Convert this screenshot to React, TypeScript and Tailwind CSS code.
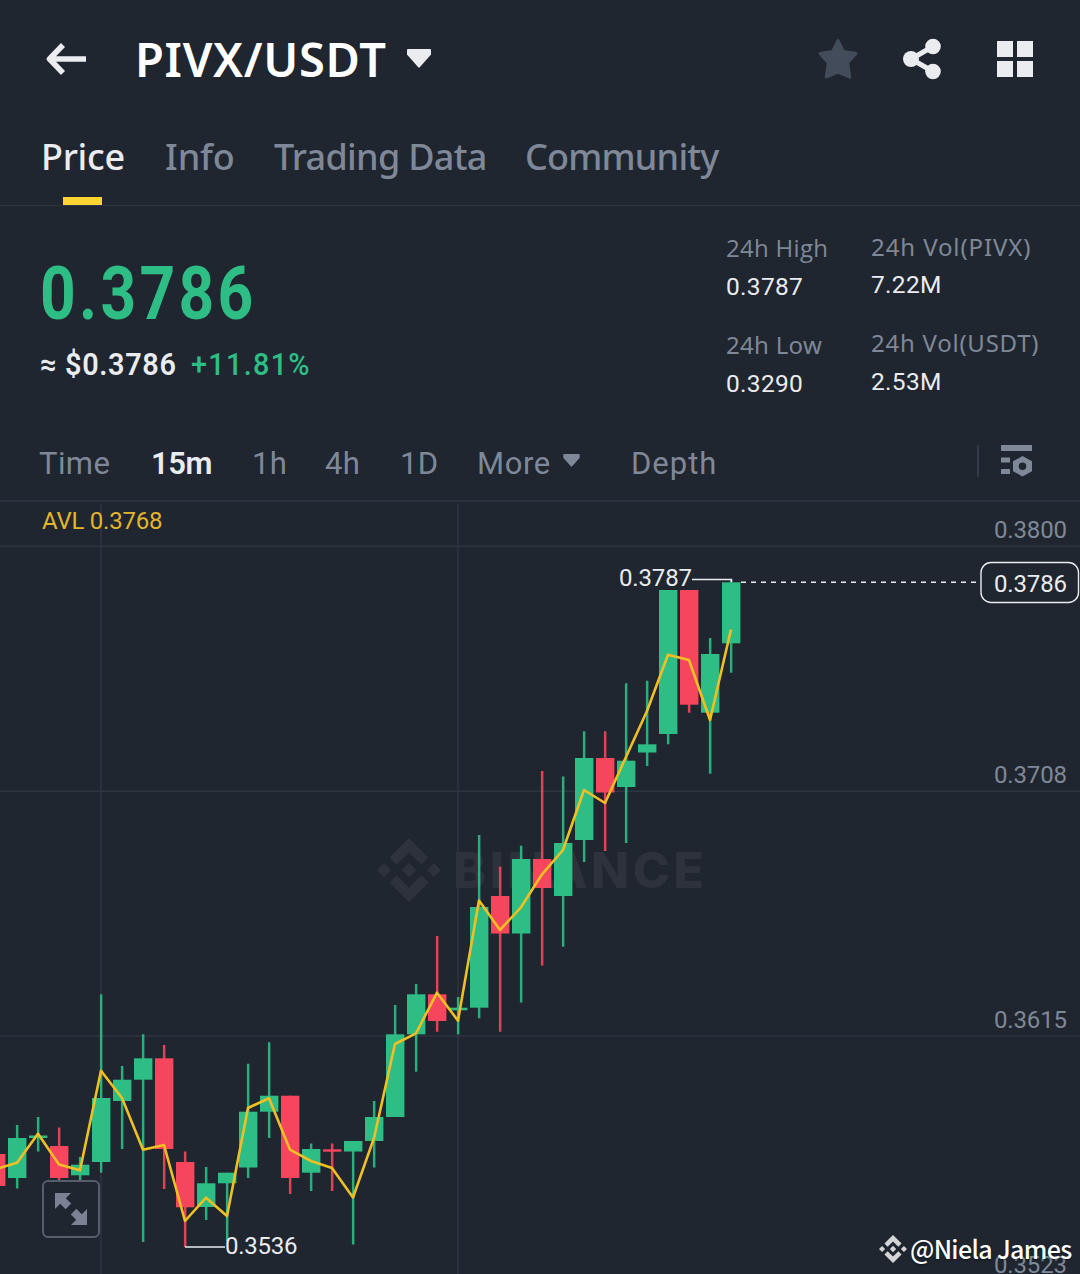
import { useState } from 'react';
import { clsx } from 'clsx';

type Candle = {
  up: boolean;
  high: number;
  top: number;
  bottom: number;
  low: number;
  avl: number;
};

const STEP = 21;
const FIRST_X = -4;

const c = (up: boolean, high: number, top: number, bottom: number, low: number, avl: number): Candle => ({
  up,
  high,
  top,
  bottom,
  low,
  avl,
});

// 15m candles, left to right, in chart units
const candles: Candle[] = [
  c(false, 1154, 1154, 1186, 1186, 1169),
  c(true, 1125, 1138, 1178, 1188.5, 1162.7),
  c(true, 1117, 1135.5, 1138, 1151.5, 1133.7),
  c(false, 1127.5, 1146, 1178, 1181, 1164.5),
  c(true, 1157, 1164.7, 1175.3, 1180, 1170.3),
  c(true, 994.3, 1098, 1162, 1172.7, 1070.7),
  c(true, 1066, 1079.7, 1101, 1149, 1098),
  c(true, 1034.3, 1058.3, 1079.7, 1242, 1149.7),
  c(false, 1045, 1058.3, 1149, 1189, 1145),
  c(false, 1151.5, 1162, 1207.3, 1247, 1221),
  c(true, 1167, 1183.3, 1207, 1220, 1197.7),
  c(true, 1172.7, 1172.7, 1183.3, 1241, 1216),
  c(true, 1063.7, 1111.7, 1167.5, 1178, 1108),
  c(true, 1042.3, 1095.7, 1111.7, 1138, 1098.3),
  c(false, 1095.7, 1095.7, 1178, 1194, 1149.7),
  c(true, 1143.5, 1149, 1172.7, 1191, 1161),
  c(false, 1143.5, 1149.3, 1151.7, 1191, 1168),
  c(true, 1141, 1141, 1151.5, 1244.5, 1197.5),
  c(true, 1101, 1117, 1141, 1167.5, 1138),
  c(true, 1005, 1034.3, 1117, 1117, 1044),
  c(true, 984, 994.3, 1034.3, 1071.7, 1033.3),
  c(false, 936, 994.3, 1021, 1031.7, 992.7),
  c(true, 997, 1007.7, 1010.3, 1034.3, 1020.7),
  c(true, 835, 907, 1007.7, 1018.3, 900.5),
  c(false, 866.7, 896, 933.5, 1031.7, 930),
  c(true, 845.7, 859, 933.5, 1002.5, 907.3),
  c(false, 771, 859, 888, 965.5, 874.3),
  c(true, 776.5, 843, 896, 946.7, 850),
  c(true, 731.3, 758, 840, 862, 790),
  c(false, 731.3, 758, 792.5, 851, 803),
  c(true, 683.3, 760.7, 787, 843, 757),
  c(true, 680.7, 744.3, 752.5, 766, 711),
  c(true, 590, 590, 734, 744.3, 654.7),
  c(false, 590, 590, 704.7, 712.7, 660),
  c(true, 638, 654, 712.7, 773.7, 720),
  c(true, 580, 582.3, 643.3, 672.7, 629.5),
];

const candleX = (i: number) => FIRST_X + i * STEP;

const tabs = [
  { label: 'Price', box: 'w-[124px] tracking-[-0.3px]' },
  { label: 'Info', box: 'w-[109px] tracking-[-0.1px]' },
  { label: 'Trading Data', box: 'w-[251px] tracking-[-0.7px]' },
  { label: 'Community', box: 'w-[200px] tracking-[-0.8px]' },
];

const intervals = [
  { label: 'Time', box: 'w-[112px]' },
  { label: '15m', box: 'w-[101px] tracking-[-0.5px]' },
  { label: '1h', box: 'w-[73px]' },
  { label: '4h', box: 'w-[75px]' },
  { label: '1D', box: 'w-[77px]' },
];

const stats = [
  { label: '24h High', value: '0.3787', box: "pt-px font-['Open_Sans','Noto_Sans',sans-serif] tracking-[0.3px]", gap: 'mt-[5px]' },
  { label: '24h Vol(PIVX)', value: '7.22M', box: "font-['Noto_Sans',sans-serif] tracking-[0.9px]", gap: 'mt-[4px]' },
  { label: '24h Low', value: '0.3290', box: "pt-px font-['Noto_Sans',sans-serif] tracking-[0.3px]", gap: 'mt-[5px]' },
  { label: '24h Vol(USDT)', value: '2.53M', box: "-mt-px font-['Noto_Sans',sans-serif] tracking-[0.75px]", gap: 'mt-[5px]' },
];

function BinanceMark({ className }: { className?: string }) {
  return (
    <svg viewBox="0 0 64 64" className={className} fill="currentColor">
      <path d="M32 0 51.5 19.5 44.2 26.8 32 14.6 19.8 26.8 12.5 19.5Z" />
      <path d="M32 64 51.5 44.5 44.2 37.2 32 49.4 19.8 37.2 12.5 44.5Z" />
      <path d="M7 25 14 32 7 39 0 32ZM57 25 64 32 57 39 50 32ZM32 24.8 39.2 32 32 39.2 24.8 32Z" />
    </svg>
  );
}

function Header() {
  return (
    <header className="flex h-[117px] items-center pl-[45px] pr-[47px]">
      <svg viewBox="0 0 42 34" className="h-[34px] w-[42px] text-[#eaecef]" fill="none" stroke="currentColor" strokeWidth="5.6">
        <path d="M41 17H6M18 3 4.5 17 18 31" strokeLinejoin="round" />
      </svg>
      <h1 className="ml-[48px] w-[272px] whitespace-nowrap pt-[2px] font-['Noto_Sans',sans-serif] text-[47px] font-semibold leading-none tracking-[0.7px] text-white">
        PIVX/USDT
      </h1>
      <svg viewBox="0 0 24 19" className="h-[19px] w-[24px] text-[#eaecef]" fill="currentColor">
        <path d="M1 0H23Q24 0 24 1V5.5L13 18Q12 19 11 18L0 5.5V1Q0 0 1 0Z" />
      </svg>
      <div className="ml-auto flex items-center">
        <svg viewBox="0 0 40 42" className="h-[42px] w-[40px] text-[#434c5a]" fill="currentColor" stroke="currentColor" strokeWidth="3" strokeLinejoin="round">
          <path d="M20 2.5 25.4 13.6 38 15.5 29.6 24.8 31.8 39 20 34 8.2 39 10.4 24.8 2 15.5 14.6 13.6Z" />
        </svg>
        <svg viewBox="0 0 40 42" className="ml-[44px] h-[42px] w-[40px] text-[#eaecef]" fill="currentColor">
          <path d="M31 8.5 9 21 31 33.5" fill="none" stroke="currentColor" strokeWidth="5" />
          <circle cx="31" cy="8.5" r="7.8" />
          <circle cx="9" cy="21" r="8" />
          <circle cx="31" cy="33.5" r="7.8" />
        </svg>
        <div className="ml-[55px] grid grid-cols-2 gap-[4px]">
          {[0, 1, 2, 3].map((n) => (
            <span key={n} className="size-[16px] bg-[#eaecef]" />
          ))}
        </div>
      </div>
    </header>
  );
}

function Tabs() {
  const [active, setActive] = useState('Price');

  return (
    <nav className="flex h-[89px] items-stretch border-b border-[#2e343f] pl-[41px] font-['Noto_Sans',sans-serif] text-[36px] font-medium">
      {tabs.map(({ label, box }) => (
        <button
          key={label}
          onClick={() => setActive(label)}
          className={clsx('flex flex-col items-start whitespace-nowrap', box, active === label ? 'text-[#eaecef]' : 'text-[#7f8898]')}
        >
          <span className="mt-[15px] leading-[50px]">{label}</span>
          {active === label && <span className="ml-[22px] mt-auto h-[8px] w-[39px] bg-[#fcd535]" />}
        </button>
      ))}
    </nav>
  );
}

function Summary() {
  return (
    <section className="flex h-[222px] pl-[40px] font-[Roboto,sans-serif]">
      <div className="w-[686px]">
        <p className="mt-[41px] origin-left scale-x-[0.83] whitespace-nowrap text-[75px] font-bold leading-[92px] tracking-[4px] text-[#2ebd85]">
          0.3786
        </p>
        <p className="mt-[8px] flex text-[31px] leading-[36px]">
          <span className="w-[151px] origin-left scale-x-[0.93] whitespace-nowrap font-semibold tracking-[0.7px] text-[#eaecef]">≈ $0.3786</span>
          <span className="origin-left scale-x-[0.93] whitespace-nowrap font-medium tracking-[1.4px] text-[#2ebd85]">+11.81%</span>
        </p>
      </div>
      <dl className="mt-[24px] grid h-[194px] grid-cols-[145px_200px] grid-rows-[97px_97px]">
        {stats.map(({ label, value, box, gap }) => (
          <div key={label} className={box}>
            <dt className="whitespace-nowrap text-[24px] leading-[34px] text-[#7f8898]">{label}</dt>
            <dd className={clsx('font-[Roboto,sans-serif] text-[24.5px] leading-[34px] tracking-[0.3px] text-[#eaecef]', gap)}>{value}</dd>
          </div>
        ))}
      </dl>
    </section>
  );
}

function IntervalBar() {
  const [active, setActive] = useState('15m');

  return (
    <div className="flex h-[74px] items-center border-b-2 border-[#2d333e] pb-[6px] pl-[39px] font-[Roboto,sans-serif] text-[31px] leading-[36px] tracking-[0.4px] text-[#7f8898]">
      {intervals.map(({ label, box }) => (
        <button
          key={label}
          onClick={() => setActive(label)}
          className={clsx('pt-[5px] text-left', box, active === label && 'font-semibold text-[#eaecef]')}
        >
          {label}
        </button>
      ))}
      <button className="flex w-[154px] items-center text-left">
        <span className="w-[86px] pt-[5px] tracking-[0.6px]">More</span>
        <svg viewBox="0 0 24 19" className="-mt-[2px] h-[13px] w-[17px]" fill="currentColor">
          <path d="M1 0H23Q24 0 24 1V5.5L13 18Q12 19 11 18L0 5.5V1Q0 0 1 0Z" />
        </svg>
      </button>
      <button className="pt-[5px] tracking-[1px]">Depth</button>
      <span className="ml-auto h-[32px] w-[2px] bg-[#343b47]" />
      <svg viewBox="0 0 31 32" className="ml-[22px] mr-[48px] h-[32px] w-[31px]" fill="currentColor">
        <path d="M0 0H31V6H0ZM0 12.5H9V17.5H0ZM0 24H9V29H0Z" />
        <path fillRule="evenodd" d="M21.5 11 31 16.3V26.2L21.5 31.5 12 26.2V16.3ZM21.5 17.5a3.8 3.8 0 1 0 0 7.6 3.8 3.8 0 0 0 0-7.6Z" />
      </svg>
    </div>
  );
}

function CandleChart() {
  const avlPath = candles.map((k, i) => `${candleX(i)},${k.avl}`).join(' ');

  return (
    <svg viewBox="0 502 1080 772" className="block h-[772px] w-full font-[Roboto,sans-serif] text-[24px]">
      <g stroke="#2f3540" strokeWidth="1.6">
        <path d="M0 546.3H1080M0 791.3H1080M0 1036H1080" />
        <path d="M101 504V1274M458 504V1274" />
      </g>

      <g fill="#2e323d" color="#2e323d">
        <svg x="377" y="837.5" width="64" height="65" viewBox="0 0 64 64">
          <BinanceMark />
        </svg>
        <text x="453" y="888" textLength="251" className="font-['Inter',sans-serif] text-[50px] font-extrabold">
          BINANCE
        </text>
      </g>

      {candles.map((k, i) => (
        <g key={i} fill={k.up ? '#2ebd85' : '#f6465d'}>
          <rect x={candleX(i) - 1.1} y={k.high} width="2.5" height={k.low - k.high} opacity="0.9" />
          <rect x={candleX(i) - 9} y={k.top} width="18.4" height={k.bottom - k.top} />
        </g>
      ))}
      <polyline points={avlPath} fill="none" stroke="#efbf24" strokeWidth="2.6" strokeLinejoin="round" />

      <g fill="none" stroke="#eaecef" strokeWidth="1.4">
        <path d="M692 579.5H731.5V582" />
        <path d="M185 1247H225" />
        <path d="M741 582.3H978" strokeDasharray="5 5" />
        <rect x="981" y="562.5" width="97.5" height="40" rx="10" />
      </g>
      <g fill="#eaecef">
        <text x="619" y="586" textLength="73">0.3787</text>
        <text x="225" y="1254" textLength="72.5">0.3536</text>
        <text x="994" y="592" textLength="73">0.3786</text>
      </g>
      <text x="42" y="529" textLength="120.5" fill="#e3b52c">
        AVL 0.3768
      </text>
      <g fill="#7f8898">
        <text x="994" y="538" textLength="73">0.3800</text>
        <text x="994" y="783" textLength="73">0.3708</text>
        <text x="994" y="1028" textLength="73">0.3615</text>
        <text x="994" y="1273" textLength="73">0.3523</text>
      </g>
    </svg>
  );
}

export default function App() {
  return (
    <main className="relative h-[1274px] w-[1080px] overflow-hidden bg-[#1f262f]">
      <Header />
      <Tabs />
      <Summary />
      <IntervalBar />
      <CandleChart />

      <button className="absolute left-[42px] top-[1180px] size-[58px] rounded-[6px] border-2 border-[#565e6c] bg-[#1f262f] text-[#7a8294]">
        <svg viewBox="0 0 54 54" className="size-[54px]" fill="currentColor">
          <path d="M11 11H27L21.8 16.2 27.2 21.6 21.6 27.2 16.2 21.8 11 27Z" />
          <path d="M43 43H27L32.2 37.8 26.8 32.4 32.4 26.8 37.8 32.2 43 27Z" />
        </svg>
      </button>

      <div className="absolute left-[879px] top-[1230px] flex items-center text-white">
        <BinanceMark className="size-[28px] text-[#d5d5d6]" />
        <span className="-mt-[2px] ml-[3px] whitespace-nowrap font-['Noto_Sans_CJK_SC',sans-serif] text-[25px] font-medium leading-[40px] tracking-[-0.65px] [text-shadow:0_1px_2px_rgba(0,0,0,0.5)]">
          @Niela James
        </span>
      </div>
    </main>
  );
}
